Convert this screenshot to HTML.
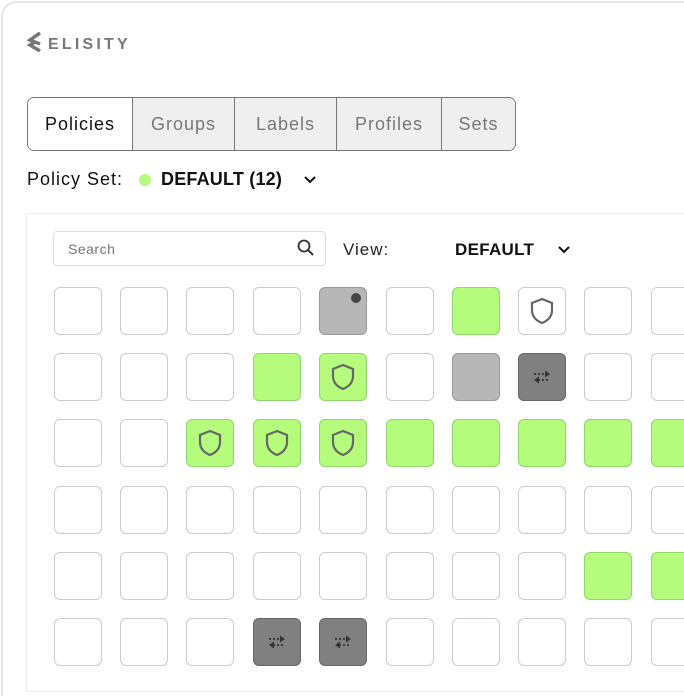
<!DOCTYPE html><html><head><style>
html,body{margin:0;width:684px;height:696px;overflow:hidden}
body{background:#fff;font-family:"Liberation Sans",sans-serif}
#wrap{position:relative;width:684px;height:696px;overflow:hidden}
.outer{position:absolute;left:1px;top:1px;width:720px;height:760px;border:2px solid #e6e6e6;border-radius:16px}
.logo{position:absolute;left:27px;top:32px;font-weight:bold;font-size:16px;letter-spacing:3.2px;color:#777}
.tabs{position:absolute;left:27px;top:97px;height:52px;display:flex;border:1.5px solid #777;border-radius:7px;overflow:hidden}
.tab{height:52px;line-height:52px;text-align:center;font-size:18px;color:#777;background:#efefef;border-left:1.5px solid #777;letter-spacing:1px}
.tab.a{background:#fff;color:#111;border-left:none}
.ps{position:absolute;left:27px;top:169px;font-size:18px;color:#111;letter-spacing:1px}
.dot{position:absolute;left:139px;top:174px;width:12px;height:12px;border-radius:50%;background:#b5fb7c}
.def{position:absolute;left:161px;top:169px;font-size:18px;font-weight:bold;color:#111;letter-spacing:.2px}
.panel{position:absolute;left:26px;top:213px;width:700px;height:477px;border:1.5px solid #ececec}
.search{position:absolute;left:53px;top:231px;width:273px;height:35px;border:1px solid #ddd;border-radius:4px;font-size:14px;color:#777;line-height:35px;box-sizing:border-box;padding-left:14px;letter-spacing:.5px}
.view{position:absolute;left:343px;top:240px;font-size:17px;color:#222;letter-spacing:1px}
.vd{position:absolute;left:455px;top:240px;font-size:17px;font-weight:bold;color:#111;letter-spacing:.3px}
.c{position:absolute;width:48px;height:48px;box-sizing:border-box;border:1.5px solid #ccc;border-radius:6px;background:#fff;display:flex;align-items:center;justify-content:center}
.g{background:#b5fb7c;border-color:#8fd66e}
.y{background:#b7b7b7;border-color:#999}
.d{background:#808080;border-color:#666}
</style></head><body><div id="wrap">
<div class="outer"></div>
<div class="logo"><svg width="16" height="20" viewBox="0 0 16 20" style="vertical-align:-3px;margin-right:5px"><path d="M13 1L3 8L13 12M8 10L3 13L13 19" fill="none" stroke="#777" stroke-width="3.5"/></svg>ELISITY</div>
<div class="tabs"><div class="tab a" style="width:104px">Policies</div><div class="tab" style="width:101px">Groups</div><div class="tab" style="width:101px">Labels</div><div class="tab" style="width:104px">Profiles</div><div class="tab" style="width:73px">Sets</div></div>
<div class="ps">Policy Set:</div><div class="dot"></div><div class="def">DEFAULT (12)</div>
<svg style="position:absolute;left:303px;top:175px" width="14" height="10"><path d="M2 2L7 7L12 2" fill="none" stroke="#111" stroke-width="2"/></svg>
<div class="panel"></div>
<div class="search">Search</div>
<svg style="position:absolute;left:297px;top:239px" width="18" height="18"><circle cx="7" cy="7" r="5.5" fill="none" stroke="#333" stroke-width="1.8"/><path d="M11 11L16 16" stroke="#333" stroke-width="2"/></svg>
<div class="view">View:</div><div class="vd">DEFAULT</div>
<svg style="position:absolute;left:557px;top:245px" width="14" height="10"><path d="M2 2L7 7L12 2" fill="none" stroke="#111" stroke-width="2"/></svg>
<div id="grid"></div>
</div>
<script>
var xs=[54,120,186,253,319,386,452,518,584,651],ys=[287,353,419,486,552,618];
var rows=["wwwwQwgSww","wwwgGwyAww","wwGGGggggg","wwwwwwwwww","wwwwwwwwgg","wwwAAwwwww"];
var sh='<svg width="26" height="30" viewBox="0 0 26 30"><path d="M13 3L23 7V14C23 21 18 25 13 27C8 25 3 21 3 14V7Z" fill="none" stroke="#666" stroke-width="2.2"/></svg>';
var ar='<svg width="24" height="20" viewBox="0 0 24 20"><path d="M4 7H16" stroke="#333" stroke-width="1.8" stroke-dasharray="2 2"/><path d="M15 3.5L20 7L15 10.5Z" fill="#333"/><path d="M8 13H20" stroke="#333" stroke-width="1.8" stroke-dasharray="2 2"/><path d="M9 9.5L4 13L9 16.5Z" fill="#333"/></svg>';
var h="";
rows.forEach(function(r,i){for(var j=0;j<10;j++){var t=r[j],cls="c",inner="";
if(t=="g")cls+=" g";if(t=="G"){cls+=" g";inner=sh}if(t=="S")inner=sh;if(t=="y")cls+=" y";
if(t=="Q"){cls+=" y";inner='<div style="position:absolute;right:5px;top:5px;width:10px;height:10px;border-radius:50%;background:#444"></div>'}
if(t=="A"){cls+=" d";inner=ar}
h+='<div class="'+cls+'" style="left:'+xs[j]+'px;top:'+ys[i]+'px">'+inner+'</div>';}});
document.getElementById("grid").innerHTML=h;
</script>
</body></html>
